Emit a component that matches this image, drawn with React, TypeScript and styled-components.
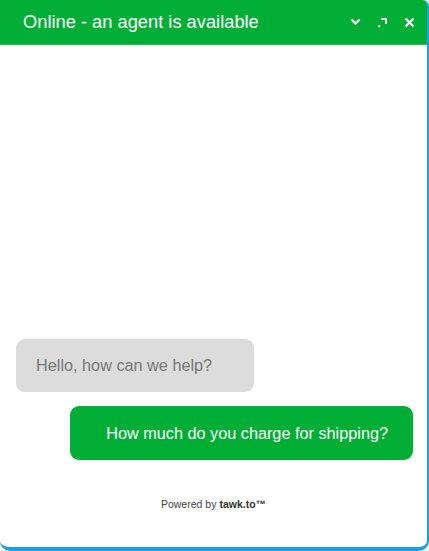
import React from 'react';
import styled, {createGlobalStyle} from 'styled-components';

const GlobalStyle = createGlobalStyle`
    html, body {
        margin: 0;
        padding: 0;
        background: #ffffff;
    }
    body {
        font-family: "Liberation Sans", Arial, sans-serif;
    }
`

function App() {
    return (
        <>
            <GlobalStyle/>
            <Widget>
                <Header>
                    <Title>Online - an agent is available</Title>
                    <Controls>
                        <IconButton aria-label="minimize">
                            <svg width="11" height="8" viewBox="0 0 11 8">
                                <path d="M1.5 1.5 L5.5 5.5 L9.5 1.5" fill="none" stroke="#fff" strokeWidth="2.4"/>
                            </svg>
                        </IconButton>
                        <IconButton aria-label="popout">
                            <svg width="11" height="11" viewBox="0 0 11 11">
                                <path d="M4 2 H9 V7" fill="none" stroke="#fff" strokeWidth="1.8"/>
                                <rect x="1" y="8" width="2.2" height="2.2" fill="#fff"/>
                            </svg>
                        </IconButton>
                        <IconButton aria-label="close">
                            <svg width="11" height="11" viewBox="0 0 11 11">
                                <path d="M1.5 1.5 L9.5 9.5 M9.5 1.5 L1.5 9.5" fill="none" stroke="#fff" strokeWidth="2.2"/>
                            </svg>
                        </IconButton>
                    </Controls>
                </Header>
                <Messages>
                    <Bubble $agent>Hello, how can we help?</Bubble>
                    <Bubble>How much do you charge for shipping?</Bubble>
                </Messages>
                <Footer>
                    Powered by <b>tawk.to™</b>
                </Footer>
            </Widget>
        </>
    );
}

const Widget = styled.div`
    width: 429px;
    height: 551px;
    box-sizing: border-box;
    display: flex;
    flex-direction: column;
    background: #ffffff;
    border-right: 2px solid #1ba1e3;
    border-bottom: 4px solid #1ba1e3;
    border-radius: 0 6px 10px 10px;
    overflow: hidden;
`

const Header = styled.div`
    height: 45px;
    flex-shrink: 0;
    background: #00ae35;
    display: flex;
    align-items: center;
    justify-content: space-between;
    padding: 0 12px 0 23px;
    border-bottom: 1px solid #2fb95a;
    box-sizing: border-box;
`

const Title = styled.span`
    color: #ffffff;
    font-size: 18.3px;
    line-height: 22px;
    margin-top: -1px;
`

const Controls = styled.div`
    display: flex;
    align-items: center;
    gap: 16px;
`

const IconButton = styled.button`
    background: none;
    border: 0;
    padding: 0;
    width: 11px;
    height: 11px;
    display: flex;
    align-items: center;
    justify-content: center;
    cursor: pointer;
`

const Messages = styled.div`
    flex: 1;
    display: flex;
    flex-direction: column;
    justify-content: flex-end;
    gap: 14px;
    padding: 0 14px 0 16px;
`

const Bubble = styled.div<{ $agent?: boolean }>`
    align-self: ${p => p.$agent ? 'flex-start' : 'flex-end'};
    background: ${p => p.$agent ? '#dcdcdc' : '#00ae35'};
    color: ${p => p.$agent ? '#777777' : '#ffffff'};
    font-size: 16.25px;
    line-height: 19px;
    border-radius: 9px;
    padding: ${p => p.$agent ? '17px 42px 17px 20px' : '18px 25px 17px 36px'};
`

const Footer = styled.div`
    height: 87px;
    flex-shrink: 0;
    display: flex;
    align-items: center;
    justify-content: center;
    font-size: 10.5px;
    color: #444444;

    b {
        color: #333333;
        margin-left: 3px;
    }
`

export default App;
